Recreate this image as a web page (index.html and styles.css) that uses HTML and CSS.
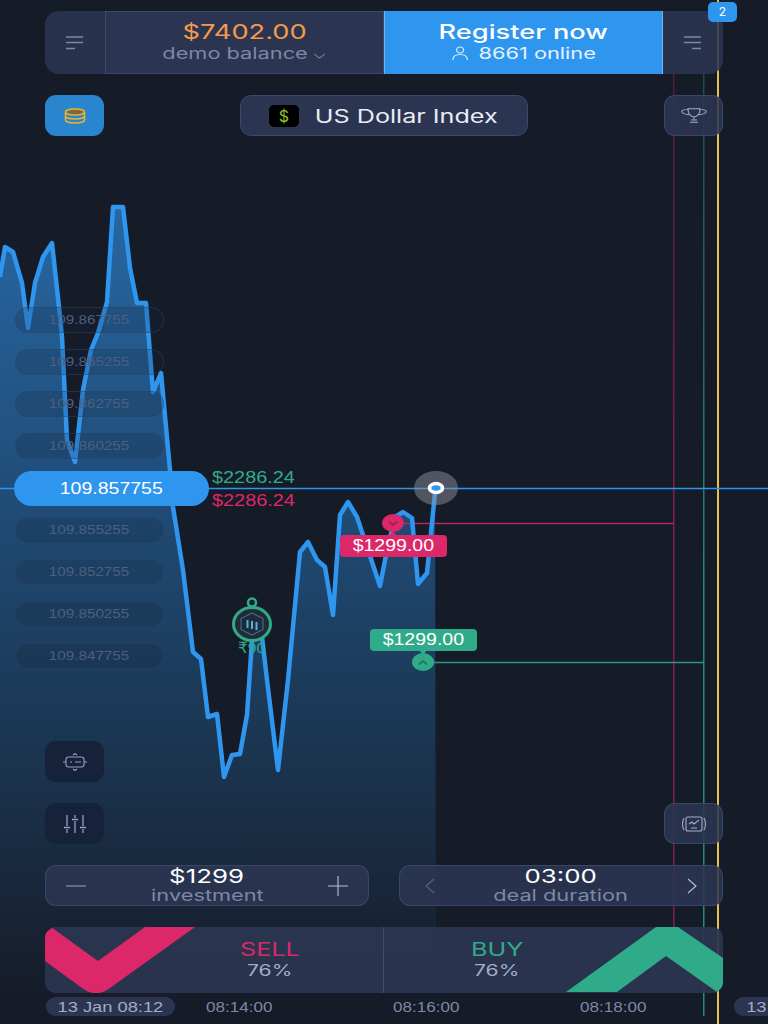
FILE: index.html
```html
<!DOCTYPE html>
<html lang="en">
<head>
    <meta charset="UTF-8">
    <meta name="viewport" content="width=device-width, initial-scale=1.0">
    <title>US Dollar Index</title>
    <link rel="stylesheet" href="styles.css">
</head>
<body>
    <div class="app">
        <!-- chart canvas, sits under the controls -->
        <svg class="chart" width="768" height="1024" viewBox="0 0 768 1024">
            <defs>
                <linearGradient id="area" gradientUnits="userSpaceOnUse" x1="0" y1="205" x2="0" y2="1000">
                    <stop offset="0" stop-color="#2767a3"/>
                    <stop offset="0.4" stop-color="#1f4a74"/>
                    <stop offset="0.75" stop-color="#1a3048"/>
                    <stop offset="1" stop-color="#161b28"/>
                </linearGradient>
                <linearGradient id="crimson" gradientUnits="userSpaceOnUse" x1="0" y1="70" x2="0" y2="500">
                    <stop offset="0" stop-color="#4a2038"/>
                    <stop offset="1" stop-color="#7f2049"/>
                </linearGradient>
                <linearGradient id="green" gradientUnits="userSpaceOnUse" x1="0" y1="70" x2="0" y2="600">
                    <stop offset="0" stop-color="#1f4a44"/>
                    <stop offset="1" stop-color="#278a70"/>
                </linearGradient>
            </defs>
            <polygon fill="url(#area)" points="0,277 5,247 13,252 22,283 28,328 35,283 43,257 52,243 59,307 62,337 67,440 75,462 83,390 91,350 98,333 107,302 113,207 123,207 130,268 137,303 146,303 153,392 161,373 170,470 173,507 183,570 193,652 201,659 208,717 217,714 224,777 232,755 240,754 247,715 252,640 262,637 267,680 278,770 288,680 300,552 308,542 317,560 325,567 333,615 340,515 348,502 357,517 363,535 380,586 387,550 395,517 403,512 412,518 418,584 427,573 435,493 436,1000 0,1000"/>
            <rect x="673" y="70" width="1.500" height="860" fill="url(#crimson)"/>
            <rect x="703" y="70" width="1.500" height="946" fill="url(#green)"/>
            <line x1="718" y1="0" x2="718" y2="1024" stroke="#e8c14a" stroke-width="2"/>
            <line x1="0" y1="488.500" x2="768" y2="488.500" stroke="#2f96f0" stroke-width="1.500"/>
            <line x1="395" y1="523.500" x2="674" y2="523.500" stroke="#b5265f" stroke-width="1.500"/>
            <line x1="423" y1="662.500" x2="704" y2="662.500" stroke="#2a9a7c" stroke-width="1.500"/>
            <polyline fill="none" stroke="#2f96f0" stroke-width="4.500" stroke-linejoin="round" points="0,277 5,247 13,252 22,283 28,328 35,283 43,257 52,243 59,307 62,337 67,440 75,462 83,390 91,350 98,333 107,302 113,207 123,207 130,268 137,303 146,303 153,392 161,373 170,470 173,507 183,570 193,652 201,659 208,717 217,714 224,777 232,755 240,754 247,715 252,640 262,637 267,680 278,770 288,680 300,552 308,542 317,560 325,567 333,615 340,515 348,502 357,517 363,535 380,586 387,550 395,517 403,512 412,518 418,584 427,573 435,493"/>

            <!-- current price dot -->
            <ellipse cx="436" cy="488" rx="22" ry="17" fill="#8a8f99" fill-opacity="0.5"/>
            <ellipse cx="436" cy="488" rx="6.500" ry="4.500" fill="#2f96f0" stroke="#fff" stroke-width="3.500"/>

            <!-- deal markers -->
            <ellipse cx="393" cy="523" rx="11" ry="9" fill="#dc2768"/>
            <path d="M389 521.500l4 3.500 4-3.500" fill="none" stroke="#a81f55" stroke-width="2"/>
            <path d="M389 536l4-5 4 5z" fill="#dc2768"/>
            <ellipse cx="423" cy="662" rx="11" ry="9" fill="#30ab8a"/>
            <path d="M419 664.500l4-3.500 4 3.500" fill="none" stroke="#1f7a62" stroke-width="2"/>
            <path d="M419 650l4 5 4-5z" fill="#30ab8a"/>

            <!-- medal -->
            <circle cx="252" cy="602.500" r="4" fill="none" stroke="#30ab8a" stroke-width="2.500"/>
            <ellipse cx="252" cy="624" rx="18.500" ry="16.500" fill="#232a33" stroke="#30ab8a" stroke-width="3"/>
            <path d="M252 613l11 5.500v11l-11 5.500-11-5.500v-11z" fill="none" stroke="#2d6f9c" stroke-width="1.200"/>
            <path d="M247.500 620v8M252 621v8M256.500 622v8" stroke="#4fb3ea" stroke-width="2"/>
        </svg>

        <span class="level-pill current"><span class="wide">109.857755</span></span>
        <span class="profit up"><span class="wide">$2286.24</span></span>
        <span class="profit down"><span class="wide">$2286.24</span></span>
        <span class="deal-tag sell-tag"><span class="wide">$1299.00</span></span>
        <span class="deal-tag buy-tag"><span class="wide">$1299.00</span></span>
        <span class="medal-value">₹90</span>

        <div class="levels">
            <span class="level-pill"><span class="wide">109.867755</span></span>
            <span class="level-pill"><span class="wide">109.865255</span></span>
            <span class="level-pill"><span class="wide">109.862755</span></span>
            <span class="level-pill"><span class="wide">109.860255</span></span>
            <span class="level-pill spacer-pill"></span>
            <span class="level-pill"><span class="wide">109.855255</span></span>
            <span class="level-pill"><span class="wide">109.852755</span></span>
            <span class="level-pill"><span class="wide">109.850255</span></span>
            <span class="level-pill"><span class="wide">109.847755</span></span>
        </div>

        <header class="top-bar">
            <button class="bar-icon left">
                <svg width="18" height="14" viewBox="0 0 18 14" fill="none" stroke="#7d88a6" stroke-width="1.300"><path d="M0 1h17M0 6.500h17M0 12.500h9"/></svg>
            </button>
            <div class="balance">
                <strong class="wide">$7402.00</strong>
                <span class="wide sub">demo balance <svg width="9" height="6" viewBox="0 0 9 6" fill="none" stroke="#7d88a6" stroke-width="0.900"><path d="M.5 1l4 4 4-4"/></svg></span>
            </div>
            <div class="register">
                <strong class="wide">Register now</strong>
                <span class="wide sub">
                    <svg class="user" width="12" height="15" viewBox="0 0 14 15" preserveAspectRatio="none" fill="none" stroke="#d6ebff" stroke-width="1.100"><circle cx="7" cy="4" r="3"/><path d="M.8 14c0-4 2.500-5.500 6.200-5.500s6.200 1.500 6.200 5.500"/></svg>
                    8661 online
                </span>
            </div>
            <button class="bar-icon right">
                <svg width="18" height="14" viewBox="0 0 18 14" fill="none" stroke="#7d88a6" stroke-width="1.300"><path d="M0 1h17M0 6.500h17M8 12.500h9"/></svg>
                <span class="badge">2</span>
            </button>
        </header>

        <div class="asset-row">
            <button class="square coins">
                <svg width="22" height="16" viewBox="0 0 22 16" fill="none" stroke="#f0b429" stroke-width="1.500"><ellipse cx="11" cy="4" rx="9.500" ry="3" fill="#7d6a3a"/><path d="M1.500 4v8c0 1.700 4.200 3 9.500 3s9.500-1.300 9.500-3V4M1.500 8c0 1.700 4.200 3 9.500 3s9.500-1.300 9.500-3"/></svg>
            </button>
            <div class="asset">
                <span class="asset-logo">$</span>
                <span class="wide asset-name">US Dollar Index</span>
            </div>
            <button class="square">
                <svg width="26" height="15" viewBox="0 0 26 20" preserveAspectRatio="none" fill="none" stroke="#a3acc4" stroke-width="1.100"><path d="M7 1h12c0 6-1 10-6 11C8 11 7 7 7 1zM7 2.500C3 1.500 0 3 1 5.500 2 8 5 8.500 8 9M19 2.500c4-1 7 .5 6 3-1 2.500-4 3-7 3.500M13 12v3M9 19h8M10 16h6"/></svg>
            </button>
        </div>

        <div class="tools">
            <div class="tool-col">
                <button class="square dark">
                    <svg width="24" height="18" viewBox="0 0 24 18" fill="none" stroke="#93a0bb" stroke-width="1.100"><rect x="3" y="4" width="18" height="10" rx="2.500"/><path d="M0 9h3M21 9h3M7 9h2M12 9h6M10 2l2-1.500L14 2M10 16l2 1.500 2-1.500"/></svg>
                </button>
                <button class="square dark">
                    <svg width="24" height="18" viewBox="0 0 24 18" fill="none" stroke="#93a0bb" stroke-width="1.300"><path d="M4 0v11M4 14v4M12 0v3M12 6v12M20 0v11M20 14v4M1 12.500h6M9 4.500h6M17 12.500h6"/></svg>
                </button>
            </div>
            <button class="square">
                <svg width="26" height="16" viewBox="0 0 26 16" fill="none" stroke="#a3acc4" stroke-width="1.100"><rect x="5" y="1" width="16" height="14" rx="2"/><path d="M8 8l3-2 2 2 5-4M10 12h6M3 2C1 6 1 10 3 14M23 2c2 4 2 8 0 12"/></svg>
            </button>
        </div>

        <div class="steppers">
            <div class="stepper">
                <svg width="20" height="20" viewBox="0 0 20 20" stroke="#8f9ab5" stroke-width="1.100"><path d="M0 10h20"/></svg>
                <div class="stepper-value"><strong class="wide">$1299</strong><span class="wide sub">investment</span></div>
                <svg width="20" height="20" viewBox="0 0 20 20" stroke="#b6bfd3" stroke-width="1.100"><path d="M0 10h20M10 0v20"/></svg>
            </div>
            <div class="stepper arrows">
                <svg width="12" height="18" viewBox="0 0 12 18" fill="none" stroke="#56627f" stroke-width="1.100"><path d="M10 2L2 9l8 7"/></svg>
                <div class="stepper-value"><strong class="wide">03:00</strong><span class="wide sub">deal duration</span></div>
                <svg width="12" height="18" viewBox="0 0 12 18" fill="none" stroke="#b6bfd3" stroke-width="1.100"><path d="M2 2l8 7-8 7"/></svg>
            </div>
        </div>

        <div class="trade">
            <div class="trade-side sell">
                <svg class="chevron" width="150" height="66" viewBox="0 0 150 66"><path fill="#dc2768" d="M8 0L0 6v28l37 27c9 7 19 7 28 0L150 0h-50L53 34 6 0z"/></svg>
                <strong class="wide">SELL</strong>
                <span class="wide">76%</span>
            </div>
            <div class="trade-side buy">
                <svg class="chevron" width="157" height="66" viewBox="0 0 157 66"><path fill="#30ab8a" d="M0 65L90 0h22l45 31v29l-6 5-51-36-49 36z"/></svg>
                <strong class="wide">BUY</strong>
                <span class="wide">76%</span>
            </div>
        </div>

        <footer class="time-axis">
            <span class="time-pill"><span class="wide">13 Jan 08:12</span></span>
            <span class="tick first"><span class="wide">08:14:00</span></span>
            <span class="tick"><span class="wide">08:16:00</span></span>
            <span class="tick"><span class="wide">08:18:00</span></span>
            <span class="time-pill next"><span class="wide">13</span></span>
        </footer>
    </div>
</body>
</html>
```

FILE: styles.css
```css
* {
    box-sizing: border-box;
}
body {
    margin: 0;
    background-color: #161b28;
    font-family: 'Inter', 'Liberation Sans', sans-serif;
    color: #ffffff;
}
button {
    font: inherit;
    color: inherit;
    padding: 0;
    cursor: pointer;
}
.app {
    position: relative;
    width: 768px;
    height: 1024px;
    overflow: hidden;
    display: flex;
    flex-direction: column;
    padding: 11px 45px 0;
}
/* the whole interface is drawn wider than its type */
.wide {
    display: inline-block;
    transform: scaleX(1.36);
    white-space: nowrap;
}
.sub {
    color: #7d88a6;
}

/* Chart layer */
.chart {
    position: absolute;
    left: 0;
    top: 0;
}
.levels {
    position: absolute;
    left: 15px;
    top: 307px;
    display: flex;
    flex-direction: column;
    gap: 16px;
}
.level-pill {
    display: flex;
    align-items: center;
    justify-content: center;
    width: 149px;
    height: 26px;
    border-radius: 13px;
    border: 1px solid rgba(50, 68, 100, 0.5);
    background-color: rgba(22, 34, 54, 0.2);
    font-family: 'Liberation Sans', sans-serif;
    font-size: 12.500px;
    color: #4c5f80;
}
.level-pill .wide,
.profit .wide,
.deal-tag .wide,
.time-axis .wide {
    transform: scaleX(1.22);
}
.spacer-pill {
    visibility: hidden;
}
.level-pill.current {
    position: absolute;
    left: 14px;
    top: 471px;
    width: 195px;
    height: 35px;
    border: 0;
    border-radius: 18px;
    background-color: #2f96f0;
    font-size: 16px;
    color: #ffffff;
}
.profit {
    position: absolute;
    left: 212px;
    width: 68px;
    font-family: 'Liberation Sans', sans-serif;
    font-size: 16.300px;
    line-height: 18px;
}
.profit .wide {
    transform-origin: left center;
}
.profit.up {
    top: 468px;
    color: #30ab8a;
}
.profit.down {
    top: 491px;
    color: #dc2768;
}
.deal-tag {
    position: absolute;
    display: flex;
    align-items: center;
    justify-content: center;
    width: 107px;
    height: 22px;
    border-radius: 4px;
    font-family: 'Liberation Sans', sans-serif;
    font-size: 16px;
}
.sell-tag {
    left: 340px;
    top: 535px;
    background-color: #dc2768;
}
.buy-tag {
    left: 370px;
    top: 629px;
    background-color: #30ab8a;
}
.medal-value {
    position: absolute;
    left: 238px;
    top: 640px;
    font-family: 'Liberation Sans', 'DejaVu Sans', sans-serif;
    font-size: 15.500px;
    line-height: 16px;
    color: #30ab8a;
}

/* Top bar */
.top-bar {
    position: relative;
    display: flex;
    height: 63px;
}
.bar-icon {
    position: relative;
    width: 60px;
    flex: none;
    display: flex;
    align-items: center;
    justify-content: center;
    border: 0;
    background-color: rgba(43, 53, 81, 0.88);
}
.bar-icon.left {
    border-radius: 14px 0 0 14px;
}
.bar-icon.right {
    border-radius: 0 14px 14px 0;
}
.badge {
    position: absolute;
    right: -14px;
    top: -9px;
    width: 29px;
    height: 20px;
    border-radius: 5px;
    background-color: #2f96f0;
    font-size: 12px;
    line-height: 20px;
    text-align: center;
}
.balance,
.register {
    width: 279px;
    flex: none;
    display: flex;
    flex-direction: column;
    align-items: center;
    justify-content: center;
    gap: 1px;
    line-height: 20px;
}
.balance {
    background-color: #2b3551;
    border: 1px solid #3b4970;
}
.balance strong {
    font-size: 20px;
    font-weight: 400;
    color: #f39a4b;
}
.balance .sub {
    font-size: 16px;
}
.register {
    background-color: #2f96f0;
    border-left: 1px solid #6cb6f5;
    border-right: 1px solid #6cb6f5;
}
.register strong {
    font-size: 20px;
    font-weight: 500;
}
.register .sub {
    font-size: 16px;
    color: #e4f2ff;
}
.user {
    margin-right: 3px;
    vertical-align: -2px;
}

/* Asset row */
.asset-row {
    position: relative;
    display: flex;
    justify-content: space-between;
    margin-top: 21px;
}
.square {
    position: relative;
    width: 59px;
    height: 41px;
    display: flex;
    align-items: center;
    justify-content: center;
    border: 1px solid rgba(59, 73, 112, 0.9);
    border-radius: 11px;
    background-color: rgba(43, 53, 81, 0.88);
}
.square.coins {
    border: 0;
    background-color: #2a85cf;
}
.square.dark {
    border: 0;
    background-color: #16223a;
}
.asset {
    width: 288px;
    height: 41px;
    display: flex;
    align-items: center;
    gap: 15px;
    padding-left: 28px;
    border: 1px solid #3b4970;
    border-radius: 11px;
    background-color: #2b3551;
}
.asset-logo {
    width: 30px;
    height: 22px;
    border-radius: 5px;
    background-color: #000000;
    color: #8fc31f;
    font-size: 16px;
    line-height: 22px;
    text-align: center;
}
.asset-name {
    font-size: 18.500px;
    margin-left: 25px;
    color: #e9edf5;
}

/* Tools */
.tools {
    position: relative;
    flex: 1;
    display: flex;
    justify-content: space-between;
    align-items: flex-end;
    padding-bottom: 21px;
}
.tool-col {
    display: flex;
    flex-direction: column;
    gap: 21px;
}

/* Steppers */
.steppers {
    position: relative;
    display: flex;
    justify-content: space-between;
}
.stepper {
    width: 324px;
    height: 41px;
    display: flex;
    align-items: center;
    justify-content: space-between;
    padding: 0 20px;
    border: 1px solid rgba(59, 73, 112, 0.9);
    border-radius: 11px;
    background-color: rgba(43, 53, 81, 0.88);
}
.stepper.arrows {
    padding: 0 24px;
}
.stepper-value {
    display: flex;
    flex-direction: column;
    align-items: center;
    gap: 1px;
    line-height: 18px;
}
.stepper-value strong {
    font-size: 19px;
    font-weight: 400;
}
.stepper-value .sub {
    font-size: 16px;
    line-height: 16px;
}

/* Sell and buy */
.trade {
    position: relative;
    display: flex;
    height: 66px;
    margin-top: 21px;
    border-radius: 11px;
    overflow: hidden;
    background-color: rgba(43, 53, 81, 0.94);
}
.trade-side {
    position: relative;
    width: 50%;
    display: flex;
    flex-direction: column;
    align-items: center;
    justify-content: center;
    font-size: 15.500px;
    line-height: 22px;
    color: #a3acc4;
}
.trade-side strong {
    font-size: 18.500px;
    font-weight: 400;
}
.trade-side.sell {
    padding-left: 111px;
    border-right: 1px solid #3f4c72;
}
.trade-side.sell strong {
    color: #dc2768;
}
.trade-side.buy {
    padding-right: 113px;
}
.trade-side.buy strong {
    color: #30ab8a;
}
.chevron {
    position: absolute;
    top: 0;
}
.sell .chevron {
    left: 0;
}
.buy .chevron {
    right: 0;
}

/* Time axis */
.time-axis {
    position: relative;
    display: flex;
    align-items: center;
    gap: 123px;
    height: 19px;
    margin: 4px -45px 8px;
    padding-left: 46px;
    font-family: 'Liberation Sans', sans-serif;
    font-size: 14px;
    color: #7d88a6;
    white-space: nowrap;
}
.time-pill {
    flex: none;
    width: 129px;
    height: 19px;
    display: flex;
    align-items: center;
    justify-content: center;
    border-radius: 10px;
    background-color: #2b3551;
    color: #a3acc4;
    font-size: 15px;
}
.tick {
    flex: none;
    width: 64px;
    text-align: center;
}
.tick.first {
    margin-left: -91px;
}
.time-pill.next {
    margin-left: -34px;
    justify-content: flex-start;
    padding-left: 14px;
}
```
